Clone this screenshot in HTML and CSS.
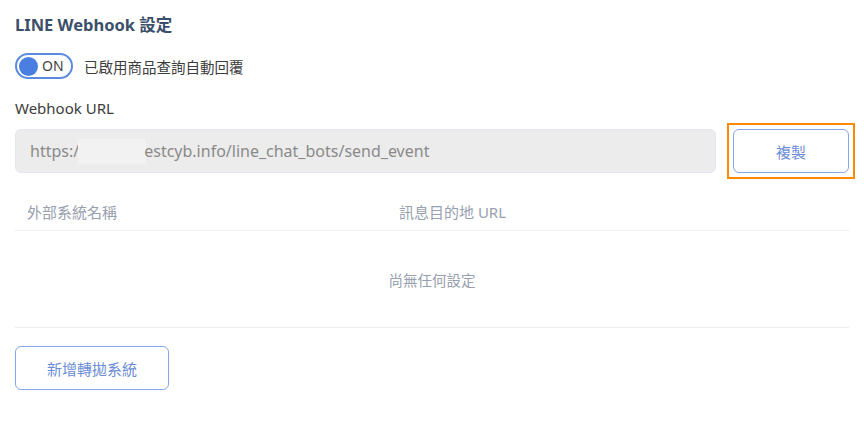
FILE: index.html
```html
<!DOCTYPE html>
<html lang="zh-Hant">
<head>
<meta charset="utf-8">
<title>LINE Webhook 設定</title>
<link rel="stylesheet" href="styles.css">
</head>
<body>
<div class="page">
  <h2 class="title">LINE Webhook 設定</h2>
  <div class="toggle-row">
    <span class="toggle"><span class="knob"></span><span class="toggle-text">ON</span></span>
    <span class="toggle-label">已啟用商品查詢自動回覆</span>
  </div>
  <div class="field-label">Webhook URL</div>
  <div class="url-row">
    <div class="url-input">https:/<span class="blur"></span>estcyb.info/line_chat_bots/send_event</div>
    <div class="focus-ring"><button class="btn btn-copy">複製</button></div>
  </div>
  <div class="table">
    <div class="thead">
      <div class="th">外部系統名稱</div>
      <div class="th">訊息目的地 URL</div>
    </div>
    <div class="empty">尚無任何設定</div>
  </div>
  <button class="btn btn-add">新增轉拋系統</button>
</div>
</body>
</html>
```
FILE: styles.css
```css
html, body {
  margin: 0;
  padding: 0;
  background: #ffffff;
}
body {
  font-family: "Noto Sans", "Noto Sans CJK TC", sans-serif;
  color: #3c3c3c;
}
.page {
  padding: 13px 15px 0 15px;
}
.title {
  margin: 0;
  font-size: 16.5px;
  line-height: 24px;
  font-weight: 700;
  color: #3b4f6b;
}
.toggle-row {
  margin-top: 16px;
  display: flex;
  align-items: center;
  height: 26px;
}
.toggle {
  box-sizing: border-box;
  width: 58px;
  height: 26px;
  border: 2px solid #5b8be0;
  border-radius: 13px;
  display: flex;
  align-items: center;
  padding-left: 2px;
}
.knob {
  width: 19px;
  height: 19px;
  border-radius: 50%;
  background: #4a7ee0;
}
.toggle-text {
  margin-left: 4px;
  font-size: 14px;
  color: #444;
  line-height: 1;
}
.toggle-label {
  margin-left: 11px;
  font-size: 14.5px;
  color: #3c3c3c;
}
.field-label {
  margin-top: 18px;
  font-size: 15px;
  line-height: 22px;
  color: #3c3c3c;
}
.url-row {
  margin-top: 10px;
  display: flex;
  align-items: flex-start;
  gap: 17px;
}
.url-input {
  box-sizing: border-box;
  flex: 0 0 701px;
  height: 44px;
  background: #ececec;
  border: 1px solid #e3e6ee;
  border-radius: 6px;
  padding-left: 14px;
  display: flex;
  align-items: center;
  font-size: 16px;
  color: #8a8a8a;
  white-space: nowrap;
}
.blur {
  display: inline-block;
  width: 68px;
  height: 25px;
  background: #f2f2f3;
  margin-left: -1px;
  margin-right: -2px;
}
.focus-ring {
  border: 2px solid #ff8a00;
  padding: 4px;
  margin: -6px;
  display: flex;
}
.btn {
  box-sizing: border-box;
  background: #fff;
  border: 1.5px solid #86a6ea;
  border-radius: 6px;
  font-family: "Noto Sans", "Noto Sans CJK TC", sans-serif;
  font-size: 15px;
  color: #6b8dd6;
  cursor: pointer;
  height: 44px;
}
.btn-copy {
  width: 116px;
  height: 44px;
}
.table {
  margin-top: 19px;
  width: 834px;
}
.thead {
  display: grid;
  grid-template-columns: 372px 1fr;
  padding-left: 12px;
  height: 38px;
  align-items: center;
  border-bottom: 1px solid #eceef2;
}
.th {
  font-size: 15px;
  color: #97a0ae;
}
.empty {
  height: 96px;
  display: flex;
  align-items: center;
  justify-content: center;
  border-bottom: 1px solid #eceef2;
  font-size: 14.5px;
  color: #97a0ae;
}
.btn-add {
  display: block;
  margin-top: 18px;
  width: 154px;
}
```
